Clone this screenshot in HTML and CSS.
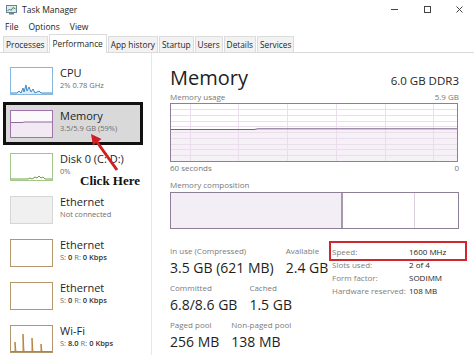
FILE: index.html
```html
<!DOCTYPE html>
<html lang="en">
<head>
    <meta charset="UTF-8">
    <title>Task Manager</title>
    <link rel="stylesheet" href="styles.css">
</head>
<body>

<div class="window">
    <div class="titlebar">
        <svg class="app-icon" width="11" height="10" viewBox="0 0 11 10">
            <rect x="0.5" y="0.5" width="10" height="7" fill="#dfe8f0" stroke="#6d8196"/>
            <polyline points="1.5,6 3.5,4 5,5.5 7,2.5 9.5,4" fill="none" stroke="#3f8a4a" stroke-width="1"/>
            <rect x="3" y="8" width="5" height="1.5" fill="#6d8196"/>
        </svg>
        <span class="title">Task Manager</span>
        <div class="controls">
            <span class="ctl"><svg width="9" height="9" viewBox="0 0 9 9"><line x1="1" y1="4.5" x2="8" y2="4.5" stroke="#444"/></svg></span>
            <span class="ctl"><svg width="9" height="9" viewBox="0 0 9 9"><rect x="1.5" y="1.5" width="6" height="6" fill="none" stroke="#444"/></svg></span>
            <span class="ctl close"><svg width="9" height="9" viewBox="0 0 9 9"><path d="M1.5 1.5 L7.5 7.5 M7.5 1.5 L1.5 7.5" stroke="#444"/></svg></span>
        </div>
    </div>

    <div class="menubar">
        <span>File</span>
        <span>Options</span>
        <span>View</span>
    </div>

    <div class="tabs">
        <span class="tab">Processes</span>
        <span class="tab active">Performance</span>
        <span class="tab">App history</span>
        <span class="tab">Startup</span>
        <span class="tab">Users</span>
        <span class="tab">Details</span>
        <span class="tab">Services</span>
    </div>

    <div class="content">
        <div class="sidebar">
            <div class="res">
                <svg class="thumb" width="43" height="28" viewBox="0 0 43 28">
                    <rect x="0.5" y="0.5" width="42" height="27" fill="#fff" stroke="#86b6de"/>
                    <polygon points="1,27 1,26 7,26 9,24 11,26 13,21 14,25 16,18 17,24 19,20 21,25 23,22 25,26 29,24 31,26 42,26 42,27" fill="#dcebf7"/>
                    <polyline points="1,26 7,26 9,24 11,26 13,21 14,25 16,18 17,24 19,20 21,25 23,22 25,26 29,24 31,26 42,26" fill="none" stroke="#3f8bc8" stroke-width="1"/>
                </svg>
                <div class="res-text">
                    <div class="res-name">CPU</div>
                    <div class="res-sub">2% 0.78 GHz</div>
                </div>
            </div>
            <div class="res selected">
                <svg class="thumb" width="43" height="28" viewBox="0 0 43 28">
                    <rect x="0.5" y="0.5" width="42" height="27" fill="#fbf9fb" stroke="#9f72ab"/>
                    <rect x="1" y="12" width="41" height="15" fill="#f1eaf3"/>
                    <polyline points="1,12.5 13,12.5 14,12 42,12" fill="none" stroke="#8f6a9c" stroke-width="1"/>
                </svg>
                <div class="res-text">
                    <div class="res-name">Memory</div>
                    <div class="res-sub">3.5/5.9 GB (59%)</div>
                </div>
            </div>
            <div class="res">
                <svg class="thumb" width="43" height="28" viewBox="0 0 43 28">
                    <rect x="0.5" y="0.5" width="42" height="27" fill="#fff" stroke="#a3c48a"/>
                    <polyline points="1,26 18,26 20,25 22,26 25,24 27,25 29,23 31,25 33,24 35,26 42,26" fill="none" stroke="#6e9f45" stroke-width="1"/>
                </svg>
                <div class="res-text">
                    <div class="res-name">Disk 0 (C: D:)</div>
                    <div class="res-sub">0%</div>
                </div>
            </div>
            <div class="res">
                <svg class="thumb" width="43" height="28" viewBox="0 0 43 28">
                    <rect x="0.5" y="0.5" width="42" height="27" fill="#f0f0f0" stroke="#d6d6d6"/>
                </svg>
                <div class="res-text">
                    <div class="res-name">Ethernet</div>
                    <div class="res-sub">Not connected</div>
                </div>
            </div>
            <div class="res">
                <svg class="thumb" width="43" height="28" viewBox="0 0 43 28">
                    <rect x="0.5" y="0.5" width="42" height="27" fill="#fff" stroke="#b3966c"/>
                </svg>
                <div class="res-text">
                    <div class="res-name">Ethernet</div>
                    <div class="res-sub">S: <b>0</b> R: <b>0 Kbps</b></div>
                </div>
            </div>
            <div class="res">
                <svg class="thumb" width="43" height="28" viewBox="0 0 43 28">
                    <rect x="0.5" y="0.5" width="42" height="27" fill="#fff" stroke="#b3966c"/>
                </svg>
                <div class="res-text">
                    <div class="res-name">Ethernet</div>
                    <div class="res-sub">S: <b>0</b> R: <b>0 Kbps</b></div>
                </div>
            </div>
            <div class="res">
                <svg class="thumb" width="43" height="28" viewBox="0 0 43 28">
                    <rect x="0.5" y="0.5" width="42" height="27" fill="#fff" stroke="#b3966c"/>
                    <path d="M5 27 L5 17 L6 27 M13 27 L13 9 L14 27 M22 27 L22 13 L23 27 M31 27 L31 19 L32 27" fill="#e9d2b0" stroke="#b9823a" stroke-width="1"/>
                    <line x1="1" y1="26.5" x2="42" y2="26.5" stroke="#b9823a"/>
                </svg>
                <div class="res-text">
                    <div class="res-name">Wi-Fi</div>
                    <div class="res-sub">S: <b>8.0</b> R: <b>0 Kbps</b></div>
                </div>
            </div>
        </div>

        <div class="main">
            <div class="mem-head">
                <span class="mem-title">Memory</span>
                <span class="mem-type">6.0 GB DDR3</span>
            </div>

            <div class="graph-label">
                <span>Memory usage</span>
                <span>5.9 GB</span>
            </div>
            <svg class="usage-graph" width="288" height="59" viewBox="0 0 288 59">
                <rect x="0" y="26" width="288" height="33" fill="#f6f0f7"/>
                <g stroke="#eadeec" stroke-width="1">
                    <line x1="0" y1="6.5" x2="288" y2="6.5"/>
                    <line x1="0" y1="12.5" x2="288" y2="12.5"/>
                    <line x1="0" y1="18.5" x2="288" y2="18.5"/>
                    <line x1="0" y1="23.5" x2="288" y2="23.5"/>
                    <line x1="0" y1="29.5" x2="288" y2="29.5"/>
                    <line x1="0" y1="35.5" x2="288" y2="35.5"/>
                    <line x1="0" y1="41.5" x2="288" y2="41.5"/>
                    <line x1="0" y1="46.5" x2="288" y2="46.5"/>
                    <line x1="0" y1="52.5" x2="288" y2="52.5"/>
                    <line x1="20.5" y1="0" x2="20.5" y2="59"/>
                    <line x1="68.5" y1="0" x2="68.5" y2="59"/>
                    <line x1="117.5" y1="0" x2="117.5" y2="59"/>
                    <line x1="166.5" y1="0" x2="166.5" y2="59"/>
                    <line x1="215.5" y1="0" x2="215.5" y2="59"/>
                    <line x1="263.5" y1="0" x2="263.5" y2="59"/>
                </g>
                <polyline points="0,26.5 84,26.5 88,25.8 288,25.8" fill="none" stroke="#7d5f88" stroke-width="1"/>
                <rect x="0.5" y="0.5" width="287" height="58" fill="none" stroke="#8d7f95"/>
            </svg>
            <div class="graph-label axis">
                <span>60 seconds</span>
                <span>0</span>
            </div>

            <div class="graph-label comp-label">
                <span>Memory composition</span>
            </div>
            <div class="composition">
                <div class="seg in-use"></div>
                <div class="seg modified"></div>
                <div class="seg free"></div>
            </div>

            <div class="stats">
                <div class="usage">
                    <div class="stat-row">
                        <div class="stat"><div class="label">In use (Compressed)</div><div class="value">3.5 GB (621 MB)</div></div>
                        <div class="stat"><div class="label">Available</div><div class="value">2.4 GB</div></div>
                    </div>
                    <div class="stat-row">
                        <div class="stat"><div class="label">Committed</div><div class="value">6.8/8.6 GB</div></div>
                        <div class="stat"><div class="label">Cached</div><div class="value">1.5 GB</div></div>
                    </div>
                    <div class="stat-row">
                        <div class="stat"><div class="label">Paged pool</div><div class="value">256 MB</div></div>
                        <div class="stat"><div class="label">Non-paged pool</div><div class="value">138 MB</div></div>
                    </div>
                </div>
                <div class="specs">
                    <div class="spec-row marked"><span class="spec-key">Speed:</span><span>1600 MHz</span></div>
                    <div class="spec-row"><span class="spec-key">Slots used:</span><span>2 of 4</span></div>
                    <div class="spec-row"><span class="spec-key">Form factor:</span><span>SODIMM</span></div>
                    <div class="spec-row"><span class="spec-key">Hardware reserved:</span><span>108 MB</span></div>
                </div>
            </div>
        </div>
    </div>

    <!-- annotation drawn on top of the screenshot -->
    <svg class="annot-arrow" width="474" height="355" viewBox="0 0 474 355">
        <line x1="117" y1="170" x2="97" y2="142" stroke="#cf1f23" stroke-width="3"/>
        <polygon points="91,134 101.5,139 93,145.5" fill="#cf1f23"/>
    </svg>
    <div class="click-here">Click Here</div>
</div>

</body>
</html>
```

FILE: styles.css
```css
/* Base */
body { margin: 0; font-family: "Open Sans", "Noto Sans", sans-serif; color: #1e1e1e; background: #fff; }
.window { position: relative; width: 474px; height: 355px; overflow: hidden; background: #fff; }

/* Title bar */
.titlebar { height: 19px; display: flex; align-items: center; padding-left: 6px; }
.app-icon { margin-right: 5px; }
.title { font-size: 8.5px; line-height: 12px; }
.controls { margin-left: auto; display: flex; align-self: stretch; }
.ctl { width: 33px; display: flex; align-items: center; justify-content: center; }
.ctl.close { width: 30px; }

/* Menu */
.menubar { height: 14px; display: flex; align-items: center; gap: 10px; padding-left: 5px; font-size: 8.5px; }

/* Tabs */
.tabs { height: 19px; display: flex; align-items: flex-end; gap: 1px; padding-left: 3px; border-bottom: 1px solid #dadada; }
.tab { height: 16px; line-height: 15px; padding: 0 2px; font-size: 8.3px; background: #f2f2f2; border: 1px solid #dcdcdc; border-bottom: none; box-sizing: border-box; }
.tab.active { height: 19px; margin-bottom: -1px; background: #fff; line-height: 17px; padding: 0 3px; }

/* Layout */
.content { display: flex; height: 302px; }

/* Resource list */
.sidebar { width: 152px; flex-shrink: 0; border-right: 1px solid #e8e8e8; padding: 6px 0 0 3px; box-sizing: border-box; }
.res { width: 140px; height: 43px; box-sizing: border-box; border: 3px solid transparent; padding: 5px 4px; display: flex; gap: 7px; align-items: flex-start; }
.res.selected { border-color: #111; background: #d9d9d9; }
.thumb { flex-shrink: 0; }
.res-text { margin-top: -1px; }
.res-name { font-size: 11px; line-height: 14px; }
.res-sub { font-size: 7.5px; line-height: 11px; color: #6e6e6e; white-space: nowrap; }
.res-sub b { font-weight: 600; color: #333; }

/* Memory details */
.main { flex: 1; padding: 12px 15px 0 18px; }
.mem-head { height: 26px; display: flex; justify-content: space-between; align-items: baseline; }
.mem-title { font-size: 20px; line-height: 26px; }
.mem-type { font-size: 11.5px; }

.graph-label { display: flex; justify-content: space-between; font-size: 8px; line-height: 12px; color: #777; }
.usage-graph { display: block; }
.comp-label { margin-top: 5px; margin-bottom: 1px; }

.composition { height: 37px; display: flex; border: 1px solid #8d7f95; box-sizing: border-box; }
.seg { height: 100%; }
.seg.in-use { width: 170px; background: #f3edf5; border-right: 2px solid #a898ad; }
.seg.modified { width: 71px; border-right: 1px solid #d9ceda; }
.seg.free { flex: 1; }

/* Stats */
.stats { display: flex; margin-top: 16px; }
.usage { width: 162px; flex-shrink: 0; }
.stat-row { display: flex; gap: 12px; margin-bottom: 3px; }
.stat .label { font-size: 8px; line-height: 12px; color: #7b7b7b; white-space: nowrap; }
.stat .value { font-size: 14px; line-height: 22px; white-space: nowrap; }

.specs { flex: 1; font-size: 8px; }
.spec-row { display: flex; line-height: 13px; }
.spec-key { width: 77px; color: #808080; }
.spec-row.marked { position: relative; }
.spec-row.marked::after { content: ""; position: absolute; top: -4px; right: -8px; bottom: -3px; left: -3px; border: 2px solid #d0262d; }

/* Annotation */
.annot-arrow { position: absolute; left: 0; top: 0; pointer-events: none; }
.click-here { position: absolute; left: 80px; top: 173px; font-family: "Liberation Serif", serif; font-weight: bold; font-size: 13px; line-height: 16px; color: #111; }
```
